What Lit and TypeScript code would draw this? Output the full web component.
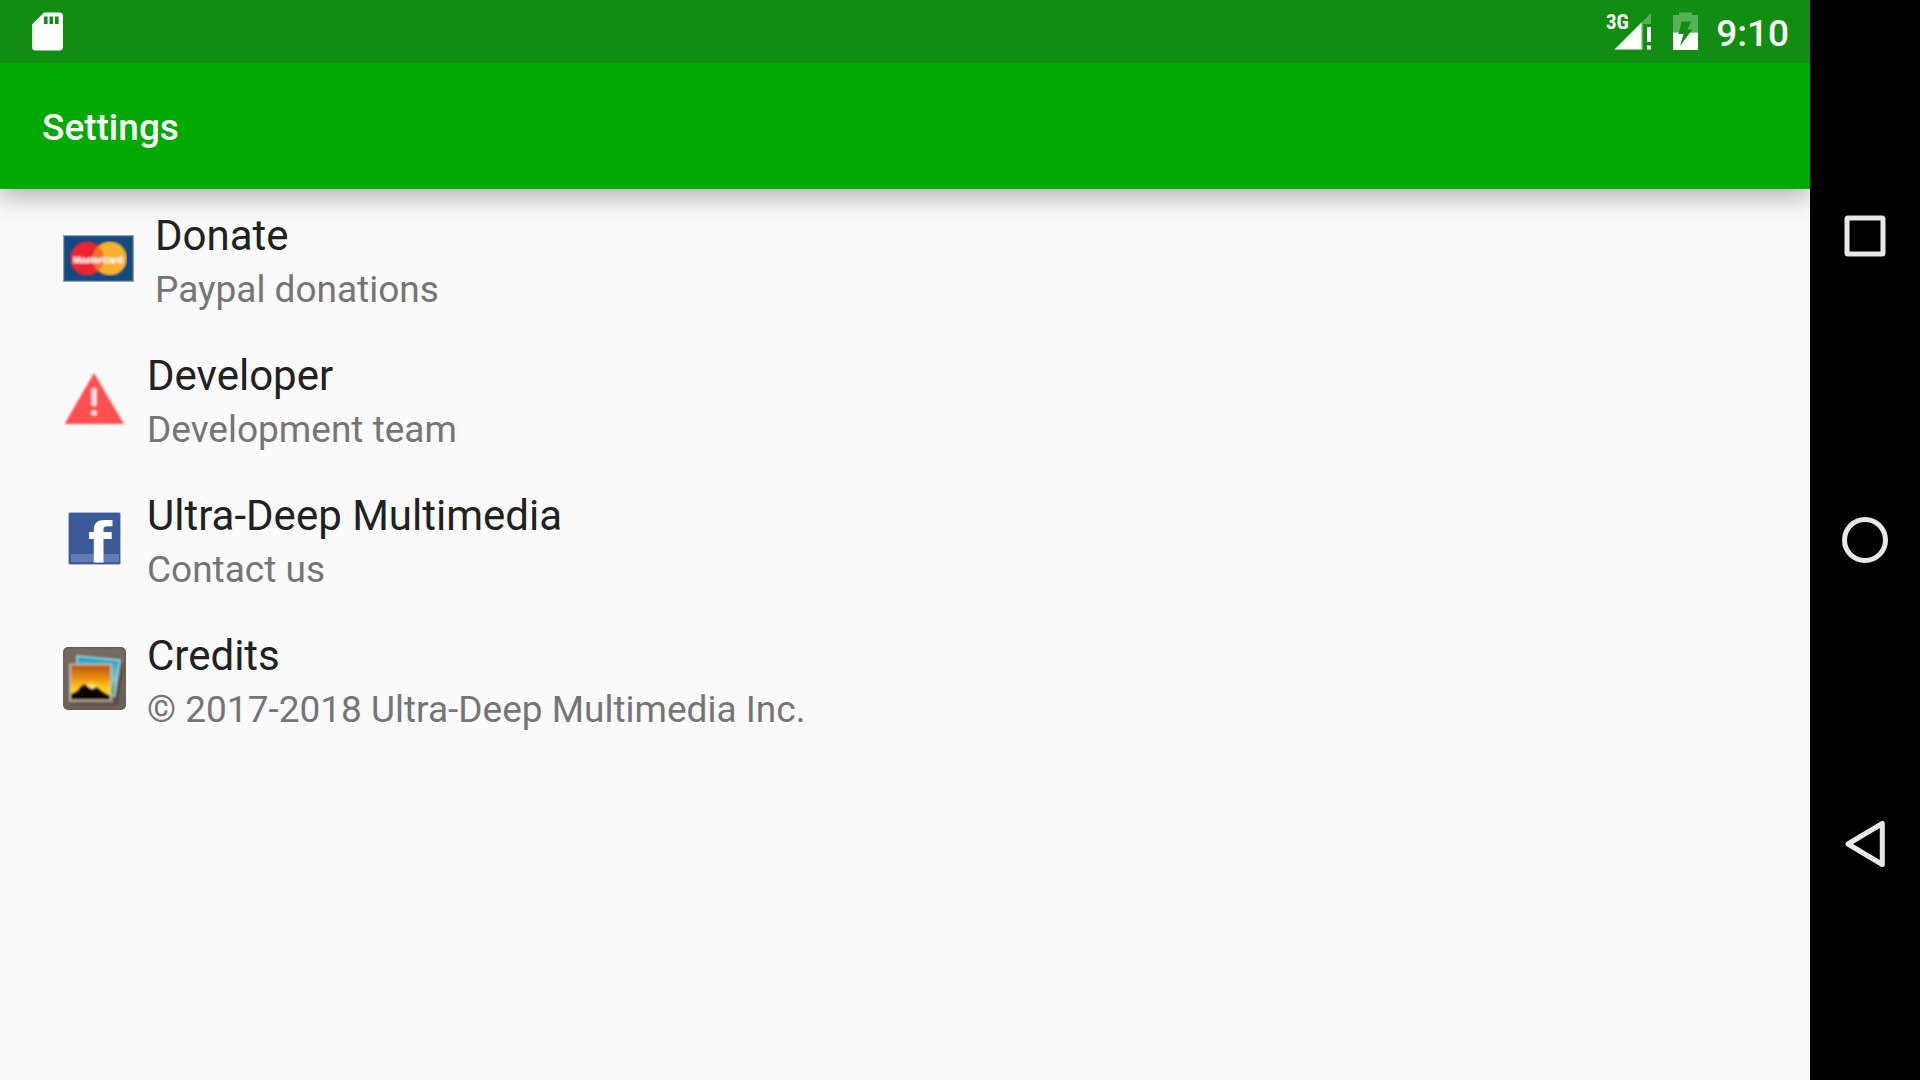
import { LitElement, html, svg, css, type TemplateResult } from "lit";
import { customElement } from "lit/decorators.js";

interface Entry {
  title: string;
  summary: string;
  icon: TemplateResult;
}

const cardIcon = html`<svg class="icon" width="71" height="47" viewBox="0 0 71 47" aria-hidden="true">
  <defs><filter id="soft-card" x="0" y="0" width="1" height="1"><feGaussianBlur stdDeviation="0.9" /></filter></defs>
  <rect width="71" height="47" fill="#8ba5c3" />
  <rect x="1" y="1" width="69" height="45" fill="#33608f" />
  <rect x="2" y="2" width="67" height="43" fill="#134a80" />
  <g filter="url(#soft-card)">
    <circle cx="24" cy="23.500" r="17" fill="#ed2030" />
    <circle cx="47" cy="23.500" r="17" fill="#fbb02d" />
    <path d="M35.500 11a17 17 0 0 1 0 25a17 17 0 0 1 0-25z" fill="#f4702f" />
    <text x="35" y="28" text-anchor="middle" font-family="Liberation Sans, sans-serif" font-size="9" font-weight="700" fill="#fff" stroke="#fff" stroke-opacity="0.400">MasterCard</text>
  </g>
</svg>`;

const warningIcon = html`<svg class="icon" width="63" height="63" viewBox="0 0 63 63" aria-hidden="true">
  <defs><filter id="soft-warn"><feGaussianBlur stdDeviation="0.8" /></filter></defs>
  <g filter="url(#soft-warn)">
    <path d="M31 6L61 57H1.500z" fill="#ff5050" />
    <rect x="28.500" y="21" width="5" height="18" rx="1.500" fill="#ffe9e9" />
    <circle cx="31" cy="46" r="2.800" fill="#ffe9e9" />
  </g>
</svg>`;

const facebookIcon = html`<svg class="icon" width="63" height="63" viewBox="0 0 63 63" aria-hidden="true">
  <rect x="5" y="5" width="53" height="53" rx="2" fill="#a9b7d6" />
  <rect x="6" y="6" width="51" height="51" rx="1" fill="#3c5a9a" />
  <rect x="8" y="47" width="48" height="8" fill="#627aae" />
  <text x="25" y="55" font-family="DejaVu Sans, sans-serif" font-size="55" font-weight="700" fill="#fff">f</text>
</svg>`;

const photosIcon = html`<svg class="icon" width="63" height="63" viewBox="0 0 63 63" aria-hidden="true">
  <defs>
    <linearGradient id="frame" x1="0" y1="0" x2="0" y2="1"><stop offset="0" stop-color="#756b60" /><stop offset="1" stop-color="#6a6056" /></linearGradient>
    <linearGradient id="sea" x1="0" y1="0" x2="0" y2="1"><stop offset="0" stop-color="#1b9fc4" /><stop offset="0.600" stop-color="#7cc8d8" /><stop offset="1" stop-color="#3f8f3a" /></linearGradient>
    <linearGradient id="sunset" x1="0" y1="0" x2="0" y2="1"><stop offset="0" stop-color="#b8560c" /><stop offset="0.350" stop-color="#e88a10" /><stop offset="0.700" stop-color="#ffd21e" /></linearGradient>
    <radialGradient id="glow"><stop offset="0" stop-color="#fffbd0" /><stop offset="1" stop-color="#ffe040" stop-opacity="0" /></radialGradient>
    <filter id="soft-photo"><feGaussianBlur stdDeviation="0.800" /></filter>
  </defs>
  <rect width="63" height="63" rx="5" fill="#6a6056" />
  <rect x="1.500" y="1.500" width="60" height="60" rx="5" fill="url(#frame)" />
  <g filter="url(#soft-photo)">
    <path d="M11 56h40l7-40l3 2l-6 40H8z" fill="#453d35" fill-opacity="0.600" />
    <path d="M14 9L57 13L51.500 49H14z" fill="url(#sea)" stroke="#a5dbe6" stroke-width="1.500" />
    <rect x="6" y="16.500" width="43" height="38" fill="#bdb5a4" />
    <rect x="8" y="18.500" width="39" height="34" fill="url(#sunset)" />
    <ellipse cx="28" cy="41" rx="11" ry="7" fill="url(#glow)" />
    <path d="M8 52.500V47l6-3l4-5l4-2l3 3l4 2l5-2l5 4l8 5v3.500z" fill="#080500" />
  </g>
</svg>`;

const entries: Entry[] = [
  { title: "Donate", summary: "Paypal donations", icon: cardIcon },
  { title: "Developer", summary: "Development team", icon: warningIcon },
  { title: "Ultra-Deep Multimedia", summary: "Contact us", icon: facebookIcon },
  { title: "Credits", summary: "© 2017-2018 Ultra-Deep Multimedia Inc.", icon: photosIcon },
];

@customElement("status-bar")
export class StatusBar extends LitElement {
  static styles = css`
    :host {
      display: flex;
      align-items: center;
      justify-content: space-between;
      height: 63px;
      padding: 0 21px 0 32px;
      background: #118e11;
      color: #fff;
    }
    .group {
      display: flex;
      align-items: center;
    }
    .signal {
      margin-right: 22px;
    }
    .battery {
      margin-right: 18px;
    }
    .network {
      font: 700 21px "Roboto Condensed", Roboto, sans-serif;
    }
    .clock {
      font-size: 37px;
      font-weight: 500;
      line-height: 44px;
      padding-top: 4px;
    }
    svg {
      display: block;
      overflow: visible;
    }
  `;

  render() {
    return html`
      <svg width="31" height="39" viewBox="0 0 31 39" role="img" aria-label="SD card">
        <path fill="#fff" fill-rule="evenodd" d="M12 .500H27.500A3.300 3.300 0 0 1 31 4V35A3.300 3.300 0 0 1 27.500 38.500H3.500A3.300 3.300 0 0 1 .200 35V12.200zM12 4.500V12h3.600V4.500zM17.500 4.500V12h3.600V4.500zM23 4.500V12h3.600V4.500z" />
      </svg>
      <div class="group">
        <svg class="signal" width="46" height="39" viewBox="0 0 46 39" role="img" aria-label="3G signal">
          <path d="M46 1V12H38V37.500H36V11z" fill="#fff" fill-opacity="0.300" />
          <path d="M36.500 10.500V37.500H9.500z" fill="#fff" />
          <path d="M42 15h4v15h-4zM42 33.500h4v4h-4z" fill="#fff" />
          <text class="network" x="1" y="17" fill="#fff">3G</text>
        </svg>
        <svg class="battery" width="25" height="39" viewBox="0 0 25 39" role="img" aria-label="Battery charging">
          <path d="M0 3H6V.500H19V3H25V20.500H0z" fill="#fff" fill-opacity="0.300" />
          <path d="M0 20.500H25V38H0z" fill="#fff" />
          <path d="M8.500 9.500H18L14.500 17.500H19.500L7 34L10.500 22H5.500z" fill="#118e11" />
        </svg>
        <time class="clock">9:10</time>
      </div>
    `;
  }
}

@customElement("nav-bar")
export class NavBar extends LitElement {
  static styles = css`
    :host {
      display: flex;
      flex-direction: column;
      box-sizing: border-box;
      padding: 84px 0;
      background: #000;
    }
    .key {
      flex: 1;
      display: grid;
      place-items: center;
      padding: 0;
      border: 0;
      background: none;
    }
    .glyph {
      fill: none;
      stroke: #e8e8e8;
      stroke-width: 5;
      stroke-linejoin: round;
    }
  `;

  private key(label: string, shape: unknown) {
    return html`<button class="key" type="button" aria-label=${label}>
      <svg class="glyph" width="50" height="50" viewBox="0 0 50 50">${shape}</svg>
    </button>`;
  }

  render() {
    return html`
      ${this.key("Recent apps", svg`<rect x="7" y="7" width="36" height="36" rx="1" />`)}
      ${this.key("Home", svg`<circle cx="25" cy="25" r="20.500" />`)}
      ${this.key("Back", svg`<path d="M42.300 4.500V45.500L8 25z" />`)}
    `;
  }
}

@customElement("app-root")
export class AppRoot extends LitElement {
  static styles = css`
    :host {
      display: grid;
      grid-template-columns: 1fr 110px;
      min-height: 100vh;
      background: #fafafa;
      font-family: Roboto, sans-serif;
    }
    .screen {
      overflow: hidden;
    }
    .status {
      position: relative;
      z-index: 2;
    }
    .bar {
      display: flex;
      align-items: center;
      position: relative;
      z-index: 1;
      height: 126px;
      padding: 0 42px;
      background: #00aa00;
      box-shadow: 0 8px 24px rgba(0, 0, 0, 0.3);
    }
    .heading {
      margin: 0;
      padding-top: 4px;
      color: #fff;
      font-size: 37px;
      font-weight: 500;
      line-height: 44px;
    }
    .list {
      margin: 0;
      padding: 0;
      list-style: none;
    }
    .row {
      display: flex;
      align-items: center;
      gap: 21px;
      box-sizing: border-box;
      width: 100%;
      height: 140px;
      padding: 0 63px 2px;
      border: 0;
      background: none;
      font: inherit;
      text-align: left;
    }
    .icon {
      flex: none;
      overflow: visible;
    }
    .text {
      display: flex;
      flex-direction: column;
      padding-top: 8px;
    }
    .title {
      color: #212121;
      font-size: 42px;
      line-height: 56px;
    }
    .summary {
      color: #757575;
      font-size: 37px;
      line-height: 52px;
    }
  `;

  render() {
    return html`
      <div class="screen">
        <status-bar class="status"></status-bar>
        <header class="bar"><h1 class="heading">Settings</h1></header>
        <main>
          <ul class="list">
            ${entries.map(
              (entry) => html`<li>
                <button class="row" type="button">
                  ${entry.icon}
                  <span class="text">
                    <span class="title">${entry.title}</span>
                    <span class="summary">${entry.summary}</span>
                  </span>
                </button>
              </li>`
            )}
          </ul>
        </main>
      </div>
      <nav-bar></nav-bar>
    `;
  }
}
